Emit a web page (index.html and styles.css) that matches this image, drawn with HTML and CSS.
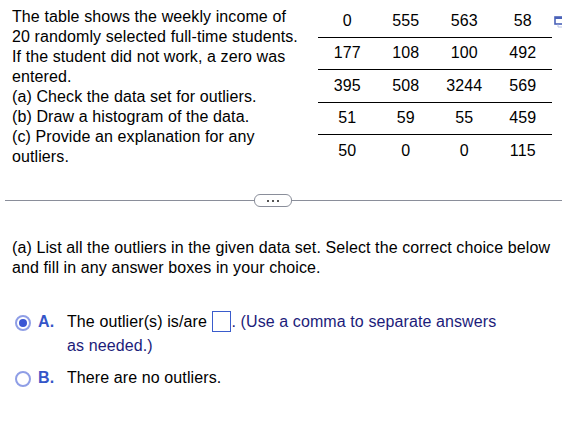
FILE: index.html
```html
<!DOCTYPE html>
<html>
<head>
<meta charset="utf-8">
<link rel="stylesheet" href="styles.css">
</head>
<body>
<div class="page">
  <div class="top">
    <p class="intro">The table shows the weekly income of 20 randomly selected full-time students. If the student did not work, a zero was entered.<br>(a) Check the data set for outliers.<br>(b) Draw a histogram of the data.<br>(c) Provide an explanation for any outliers.</p>
    <div class="tablewrap">
      <table class="data">
        <tr><td>0</td><td>555</td><td>563</td><td>58</td></tr>
        <tr><td>177</td><td>108</td><td>100</td><td>492</td></tr>
        <tr><td>395</td><td>508</td><td>3244</td><td>569</td></tr>
        <tr><td>51</td><td>59</td><td>55</td><td>459</td></tr>
        <tr><td>50</td><td>0</td><td>0</td><td>115</td></tr>
      </table>
      <svg class="popicon" width="12" height="12" viewBox="0 0 12 12"><rect x="1" y="1" width="9" height="7" fill="none" stroke="#4a62b8" stroke-width="1.6"/><rect x="1" y="1" width="9" height="2" fill="#4a62b8"/><path d="M4 8.5v2.5h7" fill="none" stroke="#b8c2e6" stroke-width="1"/></svg>
    </div>
  </div>
  <div class="sep">
    <span class="pill"><i></i><i></i><i></i></span>
  </div>
  <p class="question">(a) List all the outliers in the given data set. Select the correct choice below and fill in any answer boxes in your choice.</p>
  <div class="options">
    <div class="opt">
      <span class="radio checked"></span>
      <span class="letter">A.</span>
      <div class="opttext"><span class="blk">The outlier(s) is/are</span> <span class="box"></span><span class="navy">. (Use a comma to separate answers as needed.)</span></div>
    </div>
    <div class="opt optb">
      <span class="radio"></span>
      <span class="letter">B.</span>
      <div class="opttext"><span class="blk">There are no outliers.</span></div>
    </div>
  </div>
</div>
</body>
</html>
```
FILE: styles.css
```css
html, body {
  margin: 0;
  padding: 0;
  background: #fff;
}
body {
  font-family: "Liberation Sans", Arial, sans-serif;
  font-size: 16px;
  letter-spacing: 0.1px;
  color: #000;
}
.page {
  width: 562px;
  overflow: hidden;
}
.top {
  display: flex;
  align-items: flex-start;
}
.intro {
  margin: 7px 0 0 12px;
  width: 290px;
  flex: none;
  line-height: 20px;
}
.tablewrap {
  position: relative;
  margin-left: 16px;
  margin-top: 5px;
}
.data {
  border-collapse: collapse;
  width: 234px;
}
.data td {
  width: 58.5px;
  height: 31.5px;
  padding: 0;
  text-align: center;
  border-bottom: 1px solid #000;
  line-height: 20px;
}
.data tr:last-child td {
  border-bottom: none;
}
.popicon {
  position: absolute;
  left: 236px;
  top: 11px;
}
.sep {
  margin: 33px 0 0 5px;
  height: 1px;
  background: #8a8e9a;
  position: relative;
}
.pill {
  position: absolute;
  left: 249px;
  top: -6px;
  width: 36px;
  height: 11px;
  border: 1px solid #8a8e9a;
  border-radius: 6px;
  background: #fff;
  display: flex;
  align-items: center;
  justify-content: center;
  gap: 3px;
}
.pill i {
  display: block;
  width: 2px;
  height: 2px;
  background: #555;
}
.question {
  margin: 37px 0 0 12px;
  line-height: 20px;
  width: 545px;
}
.options {
  margin: 34px 0 0 15px;
}
.opt {
  display: flex;
  align-items: flex-start;
}
.optb {
  margin-top: 10px;
}
.radio {
  width: 12px;
  height: 12px;
  border: 2px solid #8f9ee6;
  border-radius: 50%;
  margin-top: 3px;
  position: relative;
  flex: none;
  box-sizing: content-box;
}
.radio.checked::after {
  content: "";
  position: absolute;
  left: 2px;
  top: 2px;
  width: 8px;
  height: 8px;
  border-radius: 50%;
  background: #3a56d4;
}
.letter {
  font-weight: bold;
  color: #3555c8;
  margin-left: 7px;
  width: 29px;
  flex: none;
  line-height: 20px;
}
.opttext {
  width: 440px;
  line-height: 24px;
  margin-top: -2px;
}
.blk {
  color: #000;
}
.navy {
  color: #1c1c7a;
}
.box {
  display: inline-block;
  width: 17px;
  height: 19px;
  margin-left: 1px;
  border: 1px solid #3a5ccc;
  vertical-align: -5px;
}
```
